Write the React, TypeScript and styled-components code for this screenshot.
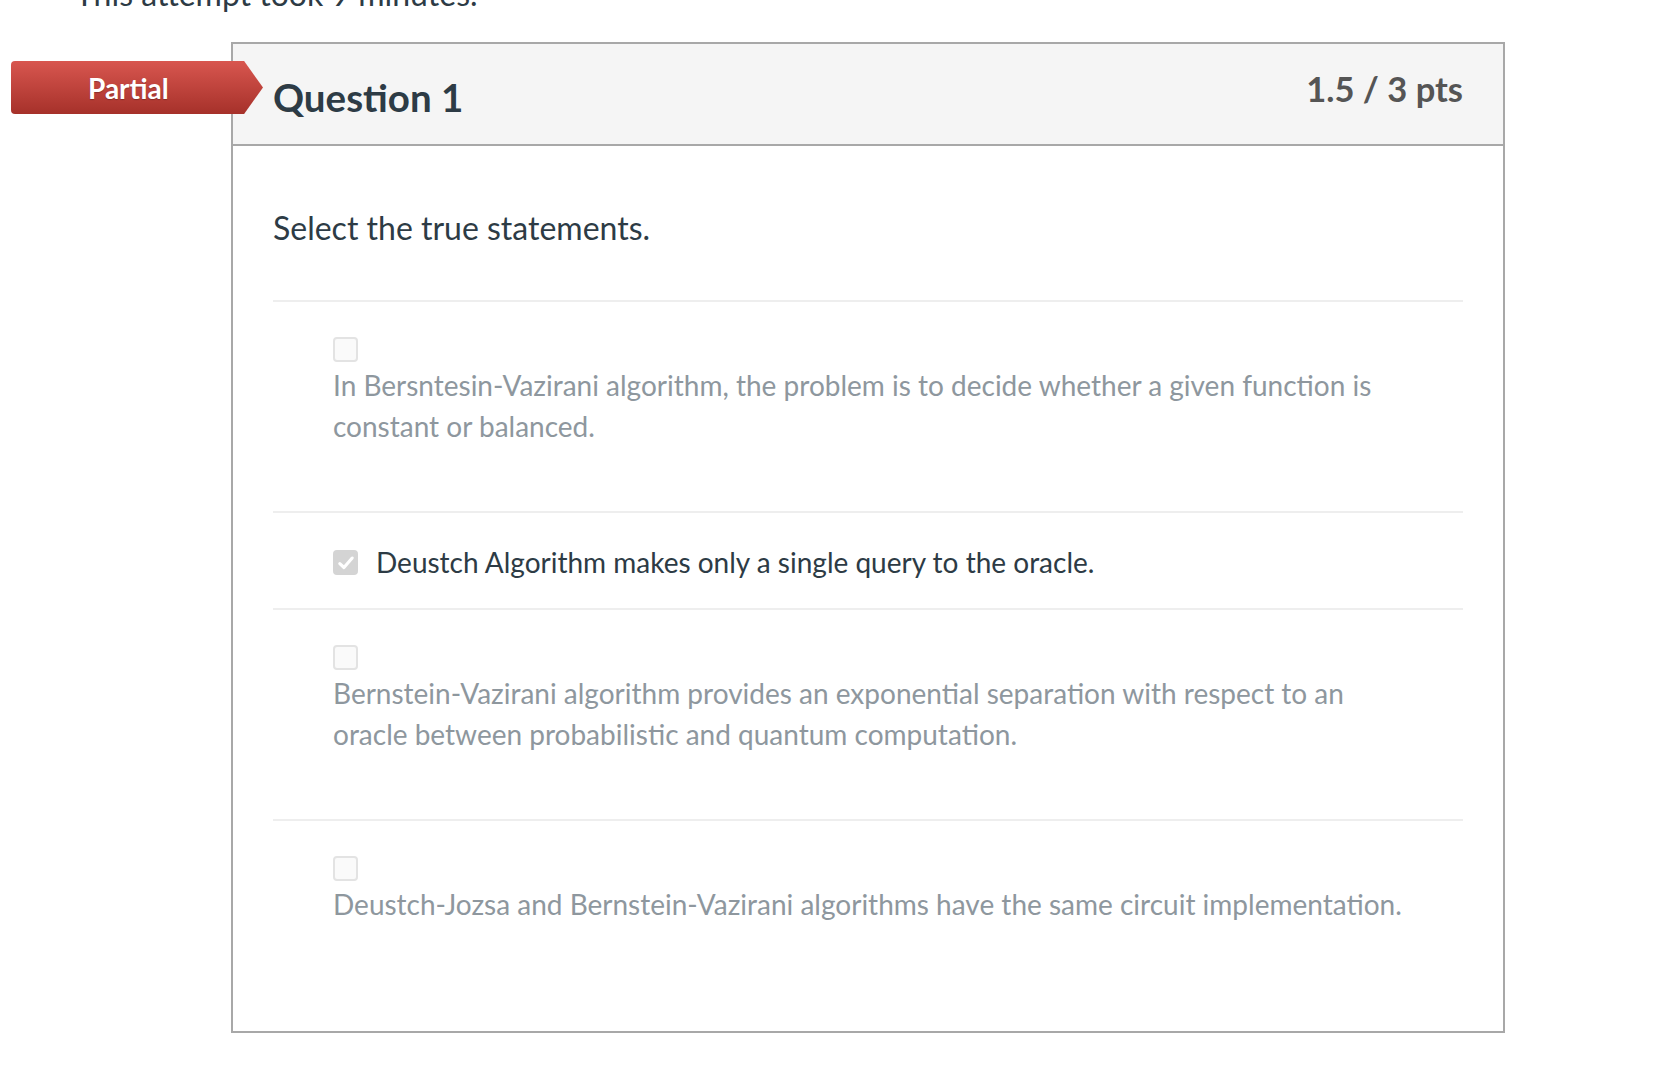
import React from 'react';
import styled, { createGlobalStyle } from 'styled-components';

const GlobalStyle = createGlobalStyle`
  html, body {
    margin: 0;
    padding: 0;
    background: #ffffff;
    font-family: Lato, "Liberation Sans", sans-serif;
    color: #2d3b45;
  }
`;

const Page = styled.div`
  position: relative;
  padding: 0 0 40px 231px;
`;

const AttemptNote = styled.div`
  margin: -25px 0 0 -156px;
  font-size: 32px;
  line-height: 38px;
  color: #2d3b45;
`;

const Question = styled.div`
  position: relative;
  width: 1270px;
  margin-top: 29px;
  border: 2px solid #a8a8a8;
  background: #fff;
`;

const Header = styled.div`
  display: flex;
  justify-content: space-between;
  align-items: flex-start;
  height: 100px;
  padding: 0 40px;
  background: #f5f5f5;
  border-bottom: 2px solid #a8a8a8;
`;

const QuestionName = styled.h2`
  margin: 30px 0 0;
  font-size: 38.5px;
  line-height: 46px;
  font-weight: 700;
  color: #2d3b45;
`;

const Points = styled.div`
  margin-top: 23px;
  font-size: 34.5px;
  line-height: 44px;
  font-weight: 700;
  color: #555555;
`;

const Badge = styled.div`
  position: absolute;
  left: -222px;
  top: 17px;
  width: 252px;
  height: 53px;
  display: flex;
  align-items: center;
  padding-left: 77px;
  box-sizing: border-box;
  color: #fff;
  font-size: 28px;
  font-weight: 700;
  background: linear-gradient(#d8564f, #a6312a);
  clip-path: polygon(0 0, 92.5% 0, 100% 50%, 92.5% 100%, 0 100%);
  border-radius: 4px 0 0 4px;
  text-shadow: 0 1px 1px rgba(0, 0, 0, 0.25);
`;

const Body = styled.div`
  padding: 0 40px 42px;
`;

const Prompt = styled.p`
  margin: 0;
  padding: 62px 0 52px;
  font-size: 32px;
  line-height: 40px;
  border-bottom: 2px solid #eeeeee;
`;

const Answer = styled.div<{ $inline?: boolean; $last?: boolean }>`
  display: ${(p) => (p.$inline ? 'flex' : 'block')};
  align-items: center;
  gap: 18px;
  padding: ${(p) => (p.$inline ? '29px 60px 25px' : '35px 60px 64px')};
  border-bottom: ${(p) => (p.$last ? 'none' : '2px solid #eeeeee')};
`;

const Box = styled.span<{ $checked?: boolean }>`
  display: flex;
  align-items: center;
  justify-content: center;
  width: 25px;
  height: 25px;
  box-sizing: border-box;
  border-radius: 4px;
  border: 2px solid ${(p) => (p.$checked ? '#d4d4d4' : '#e3e3e3')};
  background: ${(p) => (p.$checked ? '#d4d4d4' : '#fafafa')};
  flex-shrink: 0;
`;

const AnswerText = styled.div<{ $selected?: boolean }>`
  max-width: 1090px;
  margin-top: ${(p) => (p.$selected ? '0' : '3px')};
  font-size: 28px;
  line-height: 41px;
  color: ${(p) => (p.$selected ? '#2d3b45' : '#8e979e')};
`;

type AnswerItem = { text: string; selected?: boolean };

const answers: AnswerItem[] = [
  {
    text: 'In Bersntesin-Vazirani algorithm, the problem is to decide whether a given function is constant or balanced.',
  },
  { text: 'Deustch Algorithm makes only a single query to the oracle.', selected: true },
  {
    text: 'Bernstein-Vazirani algorithm provides an exponential separation with respect to an oracle between probabilistic and quantum computation.',
  },
  { text: 'Deustch-Jozsa and Bernstein-Vazirani algorithms have the same circuit implementation.' },
];

const Check = () => (
  <svg width="18" height="18" viewBox="0 0 16 16">
    <path d="M2.5 8.5 L6.2 12 L13.5 3.6" fill="none" stroke="#ffffff" strokeWidth="2.8" strokeLinecap="round" strokeLinejoin="round" />
  </svg>
);

const App: React.FC = () => {
  return (
    <>
      <GlobalStyle />
      <Page>
        <AttemptNote>This attempt took 9 minutes.</AttemptNote>
        <Question>
          <Badge>Partial</Badge>
          <Header>
            <QuestionName>Question 1</QuestionName>
            <Points>1.5 / 3 pts</Points>
          </Header>
          <Body>
            <Prompt>Select the true statements.</Prompt>
            {answers.map((a, i) => (
              <Answer key={i} $inline={a.selected} $last={i === answers.length - 1}>
                <Box $checked={a.selected}>{a.selected && <Check />}</Box>
                <AnswerText $selected={a.selected}>{a.text}</AnswerText>
              </Answer>
            ))}
          </Body>
        </Question>
      </Page>
    </>
  );
};

export default App;
